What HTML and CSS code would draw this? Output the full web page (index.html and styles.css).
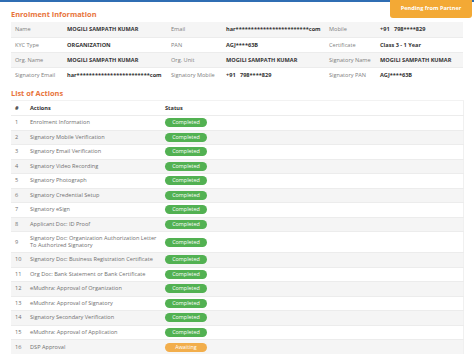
FILE: index.html
```html
<!DOCTYPE html>
<html>
<head>
<meta charset="utf-8">
<link rel="stylesheet" href="styles.css">
</head>
<body>
<div class="topbar"></div>
<div class="page">
  <div class="pending">Pending from Partner</div>
  <h2 class="heading">Enrolment Information</h2>
  <table class="info">
    <colgroup>
      <col class="c1"><col class="c2"><col class="c3"><col class="c4"><col class="c5"><col class="c6">
    </colgroup>
    <tr class="alt">
      <td class="lbl">Name</td><td class="val">MOGILI SAMPATH KUMAR</td>
      <td class="lbl">Email</td><td class="val">har************************com</td>
      <td class="lbl">Mobile</td><td class="val">+91&nbsp;&nbsp; 798****829</td>
    </tr>
    <tr>
      <td class="lbl">KYC Type</td><td class="val">ORGANIZATION</td>
      <td class="lbl">PAN</td><td class="val">AGJ****63B</td>
      <td class="lbl">Certificate</td><td class="val">Class 3 - 1 Year</td>
    </tr>
    <tr class="alt">
      <td class="lbl">Org. Name</td><td class="val">MOGILI SAMPATH KUMAR</td>
      <td class="lbl">Org. Unit</td><td class="val">MOGILI SAMPATH KUMAR</td>
      <td class="lbl">Signatory Name</td><td class="val">MOGILI SAMPATH KUMAR</td>
    </tr>
    <tr>
      <td class="lbl">Signatory Email</td><td class="val">har************************com</td>
      <td class="lbl">Signatory Mobile</td><td class="val">+91&nbsp;&nbsp; 798****829</td>
      <td class="lbl">Signatory PAN</td><td class="val">AGJ****63B</td>
    </tr>
  </table>

  <h2 class="heading h2">List of Actions</h2>
  <table class="actions">
    <colgroup><col class="a1"><col class="a2"><col class="a3"></colgroup>
    <thead>
      <tr><th>#</th><th>Actions</th><th>Status</th></tr>
    </thead>
    <tbody>
      <tr><td>1</td><td>Enrolment Information</td><td><span class="badge ok">Completed</span></td></tr>
      <tr class="alt"><td>2</td><td>Signatory Mobile Verification</td><td><span class="badge ok">Completed</span></td></tr>
      <tr><td>3</td><td>Signatory Email Verification</td><td><span class="badge ok">Completed</span></td></tr>
      <tr class="alt"><td>4</td><td>Signatory Video Recording</td><td><span class="badge ok">Completed</span></td></tr>
      <tr><td>5</td><td>Signatory Photograph</td><td><span class="badge ok">Completed</span></td></tr>
      <tr class="alt"><td>6</td><td>Signatory Credential Setup</td><td><span class="badge ok">Completed</span></td></tr>
      <tr><td>7</td><td>Signatory eSign</td><td><span class="badge ok">Completed</span></td></tr>
      <tr class="alt"><td>8</td><td>Applicant Doc: ID Proof</td><td><span class="badge ok">Completed</span></td></tr>
      <tr class="tall"><td>9</td><td>Signatory Doc: Organization Authorization Letter<br>To Authorized Signatory</td><td><span class="badge ok">Completed</span></td></tr>
      <tr class="alt"><td>10</td><td>Signatory Doc: Business Registration Certificate</td><td><span class="badge ok">Completed</span></td></tr>
      <tr><td>11</td><td>Org Doc: Bank Statement or Bank Certificate</td><td><span class="badge ok">Completed</span></td></tr>
      <tr class="alt"><td>12</td><td>eMudhra: Approval of Organization</td><td><span class="badge ok">Completed</span></td></tr>
      <tr><td>13</td><td>eMudhra: Approval of Signatory</td><td><span class="badge ok">Completed</span></td></tr>
      <tr class="alt"><td>14</td><td>Signatory Secondary Verification</td><td><span class="badge ok">Completed</span></td></tr>
      <tr><td>15</td><td>eMudhra: Approval of Application</td><td><span class="badge ok">Completed</span></td></tr>
      <tr class="alt"><td>16</td><td>DSP Approval</td><td><span class="badge wait">Awaiting</span></td></tr>
    </tbody>
  </table>
</div>
</body>
</html>
```
FILE: styles.css
```css
html, body {
  margin: 0;
  padding: 0;
  background: #ffffff;
  font-family: "Open Sans", "Liberation Sans", sans-serif;
  color: #555;
}
.topbar {
  height: 2px;
  background: #2f6db3;
}
.page {
  position: relative;
  padding: 0 11px;
}
.pending {
  position: absolute;
  top: -2px;
  right: 2px;
  width: 82px;
  height: 18px;
  line-height: 17px;
  background: #f3a935;
  color: #fff;
  font-weight: 700;
  font-size: 5.6px;
  text-align: center;
  border-radius: 0 0 3px 3px;
}
.heading {
  margin: 0;
  height: 20px;
  line-height: 24px;
  font-size: 7.4px;
  font-weight: 700;
  color: #e8743b;
}
.h2 {
  height: 16px;
  line-height: 18px;
  margin-top: 2px;
}
table {
  border-collapse: collapse;
  width: 452px;
  table-layout: fixed;
  font-size: 5.6px;
}
.c1 { width: 52px; }
.c2 { width: 104px; }
.c3 { width: 55px; }
.c4 { width: 103px; }
.c5 { width: 51px; }
.c6 { width: 87px; }
.info td {
  height: 15px;
  padding: 0 4px;
  border-top: 1px solid #ececec;
  white-space: nowrap;
  overflow: hidden;
  box-sizing: border-box;
}
.info .lbl { color: #808080; }
.info .val { color: #333; font-weight: 700; }
tr.alt td { background: #f5f5f5; }
.info tr:first-child td { border-top: none; }

.a1 { width: 15px; }
.a2 { width: 135px; }
.a3 { width: 302px; }
.actions th, .actions td {
  height: 14.5px;
  padding: 0 4px;
  text-align: left;
  border-top: 1px solid #ececec;
  box-sizing: border-box;
  line-height: 7px;
}
.actions {
  border-right: 1px solid #f0f0f0;
}
.actions th {
  height: 15px;
  color: #333;
  font-weight: 700;
  border-top: 1px solid #f2f2f2;
}
.actions td { color: #707070; }
.actions tr.tall td { height: 21px; }
.badge {
  display: inline-block;
  width: 42px;
  height: 9px;
  line-height: 9px;
  border-radius: 5px;
  color: #fff;
  text-align: center;
  font-size: 5.4px;
  vertical-align: middle;
}
.badge.ok { background: #52b152; }
.badge.wait { background: #f2ae4c; }
```
